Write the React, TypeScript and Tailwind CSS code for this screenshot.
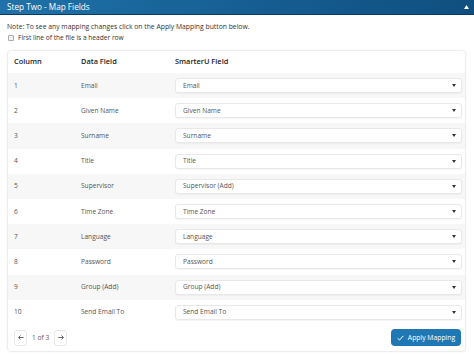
import React from "react";

const rows = [
  ["1", "Email", "Email"],
  ["2", "Given Name", "Given Name"],
  ["3", "Surname", "Surname"],
  ["4", "Title", "Title"],
  ["5", "Supervisor", "Supervisor (Add)"],
  ["6", "Time Zone", "Time Zone"],
  ["7", "Language", "Language"],
  ["8", "Password", "Password"],
  ["9", "Group (Add)", "Group (Add)"],
  ["10", "Send Email To", "Send Email To"],
];

export default function App() {
  return (
    <div
      className="w-[474px] h-[364px] bg-white text-[#333] overflow-hidden"
      style={{ fontFamily: '"Open Sans", "Noto Sans", sans-serif' }}
    >
      <div className="h-[15px] flex items-center justify-between pl-[7px] pr-[5px] bg-gradient-to-r from-[#1f72a9] via-[#165f94] to-[#0f4f7f] border-b border-[#0b3d62]">
        <span className="text-white text-[8.2px] leading-none">Step Two - Map Fields</span>
        <svg width="5" height="4" viewBox="0 0 5 4">
          <polygon points="2.5,0 5,4 0,4" fill="#fff" />
        </svg>
      </div>
      <div className="pl-[7px] pt-[7px] text-[6.8px] leading-[10px] text-[#333]">
        Note: To see any mapping changes click on the Apply Mapping button below.
      </div>
      <div className="flex items-center gap-[4px] pl-[8px] mt-[1px] text-[6.6px] leading-[10px] text-[#333]">
        <span className="w-[6px] h-[6px] border border-[#aaa] bg-[#f2f2f2] rounded-[1px]" />
        <span>First line of the file is a header row</span>
      </div>
      <div className="mx-[7px] mt-[7px] w-[459px] h-[302px] border border-[#ededed] rounded-[4px] shadow-[0_0_2px_rgba(0,0,0,0.05)] flex flex-col overflow-hidden">
        <div className="h-[22px] shrink-0 flex items-center text-[7.4px] font-semibold text-[#222]">
          <span className="w-[73px] pl-[6px]">Column</span>
          <span className="w-[94px]">Data Field</span>
          <span>SmarterU Field</span>
        </div>
        {rows.map((r, i) => (
          <div
            key={r[0]}
            className={`h-[25.2px] shrink-0 flex items-center text-[6.6px] text-[#555] ${i % 2 === 0 ? "bg-[#f7f7f7]" : "bg-white"}`}
          >
            <span className="w-[73px] pl-[6px]">{r[0]}</span>
            <span className="w-[94px]">{r[1]}</span>
            <div className="w-[287px] h-[15px] bg-white border border-[#e8e8e8] rounded-[3px] shadow-[0_1px_1px_rgba(0,0,0,0.04)] flex items-center justify-between pl-[7px] pr-[5px]">
              <span>{r[2]}</span>
              <svg width="4" height="3" viewBox="0 0 4 3">
                <polygon points="0,0 4,0 2,3" fill="#333" />
              </svg>
            </div>
          </div>
        ))}
        <div className="flex-1 flex items-center justify-between pl-[6px] pr-[4px]">
          <div className="flex items-center gap-[5px] text-[6.6px] text-[#555]">
            <span className="w-[13px] h-[16px] border border-[#e8e8e8] rounded-[3px] bg-white flex items-center justify-center">
              <svg width="6" height="5" viewBox="0 0 6 5" fill="none" stroke="#555" strokeWidth="0.9">
                <path d="M5.6 2.5H0.6M2.5 0.5L0.6 2.5L2.5 4.5" />
              </svg>
            </span>
            <span>1 of 3</span>
            <span className="w-[13px] h-[16px] border border-[#e8e8e8] rounded-[3px] bg-white flex items-center justify-center">
              <svg width="6" height="5" viewBox="0 0 6 5" fill="none" stroke="#555" strokeWidth="0.9">
                <path d="M0.4 2.5H5.4M3.5 0.5L5.4 2.5L3.5 4.5" />
              </svg>
            </span>
          </div>
          <div className="w-[70px] h-[17px] rounded-[4px] bg-[#1f77b4] text-white text-[6.8px] flex items-center justify-center gap-[4px]">
            <svg width="7" height="6" viewBox="0 0 7 6" fill="none" stroke="#fff" strokeWidth="1">
              <path d="M0.6 3.2L2.5 5L6.4 0.8" />
            </svg>
            <span>Apply Mapping</span>
          </div>
        </div>
      </div>
    </div>
  );
}
